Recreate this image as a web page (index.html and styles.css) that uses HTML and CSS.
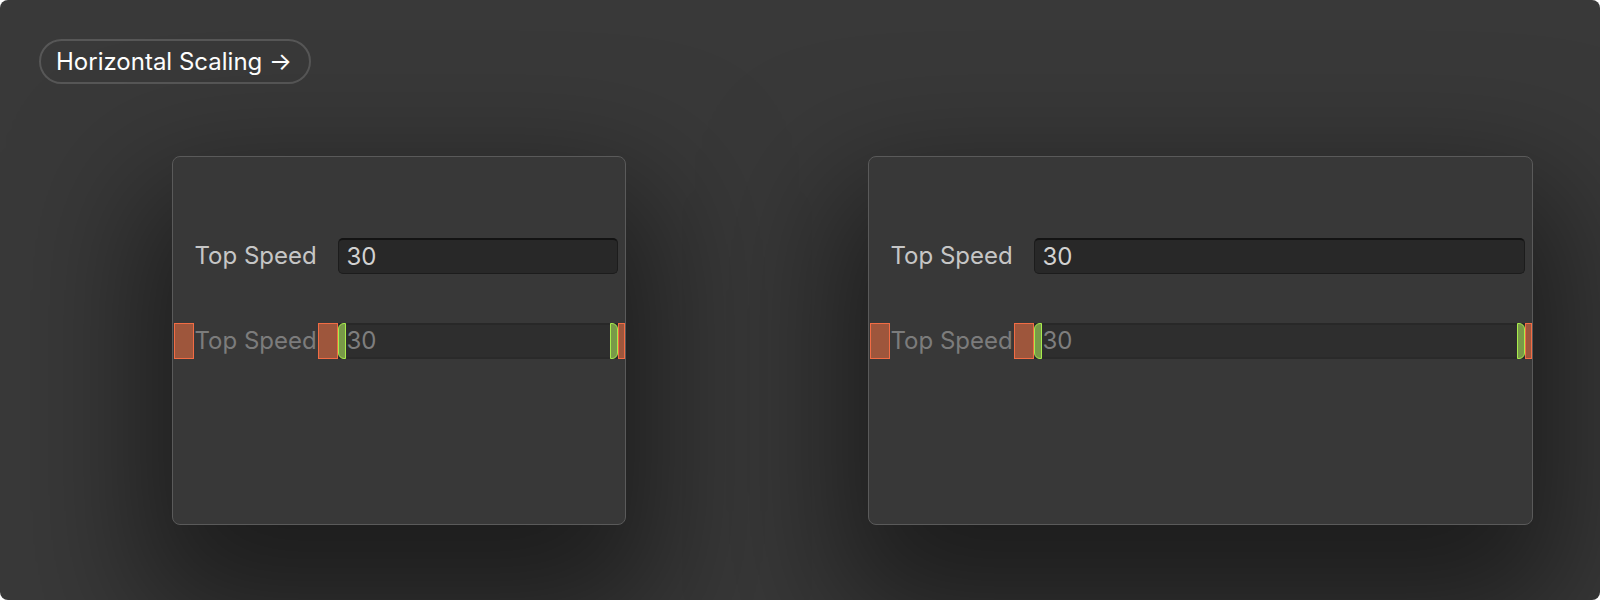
FILE: index.html
```html
<!DOCTYPE html>
<html lang="en">
<head>
<meta charset="utf-8">
<title>Horizontal Scaling</title>
<link rel="stylesheet" href="styles.css">
</head>
<body>
<div class="stage">
  <div class="topbar">
    <button class="pill">Horizontal Scaling →</button>
  </div>
  <div class="panels">
    <section class="panel panel-narrow">
      <div class="row">
        <span class="label">Top Speed</span>
        <div class="field">30</div>
      </div>
      <div class="row row-debug">
        <span class="margin-box m-left"></span>
        <span class="label">Top Speed</span>
        <span class="margin-box m-mid"></span>
        <div class="field field-debug">
          <span class="pad-box pad-left"></span>
          <span class="field-text">30</span>
          <span class="pad-box pad-right"></span>
        </div>
        <span class="margin-box m-right"></span>
      </div>
    </section>
    <section class="panel panel-wide">
      <div class="row">
        <span class="label">Top Speed</span>
        <div class="field">30</div>
      </div>
      <div class="row row-debug">
        <span class="margin-box m-left"></span>
        <span class="label">Top Speed</span>
        <span class="margin-box m-mid"></span>
        <div class="field field-debug">
          <span class="pad-box pad-left"></span>
          <span class="field-text">30</span>
          <span class="pad-box pad-right"></span>
        </div>
        <span class="margin-box m-right"></span>
      </div>
    </section>
  </div>
</div>
</body>
</html>
```
FILE: styles.css
```css
* { box-sizing: border-box; }
html, body { margin: 0; padding: 0; background: #ffffff; }
body { font-family: Inter, "Noto Sans", sans-serif; }

.stage {
  width: 1600px;
  height: 600px;
  border-radius: 8px;
  background: #393939;
  overflow: hidden;
  padding: 39px 0 0 39px;
}

.topbar { display: flex; }

.pill {
  font-family: Inter, "Noto Sans", sans-serif;
  font-size: 24px;
  color: #ffffff;
  background: transparent;
  border: 2px solid #575757;
  border-radius: 23px;
  height: 45px;
  padding: 0 17px 0 15px;
  display: flex;
  align-items: center;
  cursor: pointer;
}

.panels {
  display: flex;
  margin-top: 72px;
  margin-left: 133px;
  gap: 242px;
}

.panel {
  height: 369px;
  background: #383838;
  border: 1.5px solid #5a5a5a;
  border-radius: 8px;
  box-shadow: 0 60px 130px 30px rgba(0, 0, 0, 0.5);
  display: flex;
  flex-direction: column;
  padding: 80.5px 0 0 0.5px;
  gap: 49px;
}
.panel-narrow { width: 454px; }
.panel-wide { width: 665px; }

.row {
  display: flex;
  align-items: stretch;
  height: 36px;
  padding-left: 20px;
}
.row-debug { padding-left: 0; }

.label {
  width: 124px;
  margin-right: 20px;
  font-size: 24px;
  color: #c6c6c6;
  display: flex;
  align-items: center;
  padding-left: 1px;
  white-space: nowrap;
}
.row-debug .label { margin-right: 0; color: #7c7c7c; }

.field {
  flex: 1;
  margin-right: 7px;
  background: #282828;
  border: 1px solid #1c1c1c;
  border-top: 2px solid #131313;
  border-radius: 5px;
  font-size: 24px;
  color: #d2d2d2;
  display: flex;
  align-items: center;
  padding-left: 8px;
}

.field-debug {
  margin-right: 0;
  background: #2e2e2e;
  border: none;
  border-top: 2px solid #282828;
  border-bottom: 2px solid #2a2a2a;
  border-radius: 0;
  padding-left: 0;
  color: #7e7e7e;
}
.field-text { flex: 1; padding-left: 1px; }

.margin-box {
  display: block;
  background: #9e563c;
  border: 1px solid #f26c44;
}
.m-left { width: 20px; }
.m-mid { width: 20px; }
.m-right { width: 7px; }

.pad-box {
  display: block;
  width: 8px;
  align-self: stretch;
  margin: -2px 0;
  background: #789a48;
  border: 1px solid #a8ec4c;
}
.pad-left { border-radius: 6px 0 0 6px; }
.pad-right { border-radius: 0 6px 6px 0; }
```
